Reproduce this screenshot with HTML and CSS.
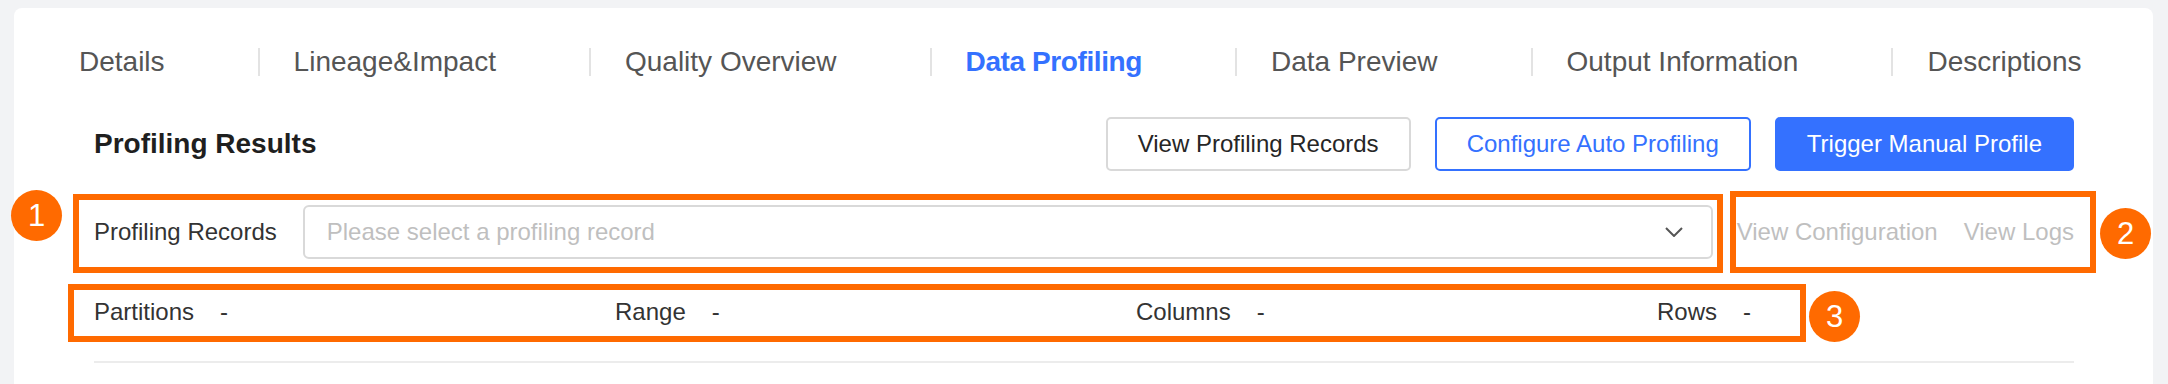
FILE: index.html
```html
<!DOCTYPE html>
<html lang="en">
<head>
    <meta charset="UTF-8">
    <title>Data Profiling</title>
    <link rel="stylesheet" href="styles.css">
</head>
<body>
<div class="page">
    <div class="card">
        <div class="tabs">
            <span class="tabs__item">Details</span>
            <span class="tabs__item">Lineage&amp;Impact</span>
            <span class="tabs__item">Quality Overview</span>
            <span class="tabs__item tabs__item--active">Data Profiling</span>
            <span class="tabs__item">Data Preview</span>
            <span class="tabs__item">Output Information</span>
            <span class="tabs__item">Descriptions</span>
        </div>
        <div class="content">
            <div class="header">
                <h2 class="header__title">Profiling Results</h2>
                <div class="header__actions">
                    <button class="btn">View Profiling Records</button>
                    <button class="btn btn--outline">Configure Auto Profiling</button>
                    <button class="btn btn--primary">Trigger Manual Profile</button>
                </div>
            </div>
            <div class="record">
                <span class="record__label">Profiling Records</span>
                <div class="select">
                    <span class="select__placeholder">Please select a profiling record</span>
                    <svg class="select__arrow" width="18" height="10" viewBox="0 0 18 10">
                        <path d="M1 1 L9 9 L17 1" fill="none" stroke="#555" stroke-width="2"/>
                    </svg>
                </div>
                <a class="record__link">View Configuration</a>
                <a class="record__link">View Logs</a>
            </div>
            <div class="stats">
                <div class="stats__item"><span class="stats__label">Partitions</span>-</div>
                <div class="stats__item"><span class="stats__label">Range</span>-</div>
                <div class="stats__item"><span class="stats__label">Columns</span>-</div>
                <div class="stats__item"><span class="stats__label">Rows</span>-</div>
            </div>
            <div class="divider"></div>
        </div>

        <!-- annotation overlays -->
        <div class="mark mark--one"></div>
        <div class="mark mark--two"></div>
        <div class="mark mark--three"></div>
        <span class="badge badge--one">1</span>
        <span class="badge badge--two">2</span>
        <span class="badge badge--three">3</span>
    </div>
</div>
</body>
</html>
```

FILE: styles.css
```css
* {
    box-sizing: border-box;
}
html, body {
    margin: 0;
    padding: 0;
    height: 100%;
    overflow: hidden;
}
body {
    background-color: #f2f3f5;
    font-family: "Liberation Sans", Arial, sans-serif;
    color: #333;
}
.page {
    padding: 8px 15px 0 14px;
}
.card {
    position: relative;
    height: 376px;
    background-color: #fff;
    border-radius: 8px 8px 0 0;
}
.tabs {
    display: flex;
    align-items: center;
    padding: 40px 0 0 65px;
}
.tabs__item {
    font-size: 28px;
    line-height: 28px;
    color: #555;
    padding-right: 93px;
    white-space: nowrap;
}
.tabs__item + .tabs__item {
    border-left: 2px solid #e3e3e3;
    padding-left: 34px;
}
.tabs__item--active {
    color: #3471ff;
    font-weight: 700;
    letter-spacing: -0.4px;
}
.content {
    padding: 0 79px 0 80px;
}
.header {
    display: flex;
    align-items: center;
    justify-content: space-between;
    margin-top: 41px;
    height: 54px;
}
.header__title {
    margin: 0;
    font-size: 28px;
    font-weight: 700;
    color: #1f1f1f;
}
.header__actions {
    display: flex;
    gap: 24px;
}
.btn {
    height: 54px;
    padding: 0 30px;
    font-family: inherit;
    font-size: 24px;
    color: #262626;
    background-color: #fff;
    border: 2px solid #d9d9d9;
    border-radius: 5px;
}
.btn--outline {
    color: #3471ff;
    border-color: #3471ff;
}
.btn--primary {
    color: #fff;
    background-color: #3471ff;
    border-color: #3471ff;
}
.record {
    display: flex;
    align-items: center;
    margin-top: 34px;
    height: 54px;
    font-size: 24px;
}
.record__label {
    margin-right: 26px;
    color: #333;
}
.select {
    flex: 1;
    display: flex;
    align-items: center;
    justify-content: space-between;
    height: 54px;
    padding: 0 28px 0 22px;
    border: 2px solid #d9d9d9;
    border-radius: 6px;
}
.select__placeholder {
    color: #bfbfbf;
}
.record__link {
    margin-left: 24px;
    color: #bfbfbf;
    white-space: nowrap;
}
.record__link + .record__link {
    margin-left: 26px;
}
.stats {
    display: grid;
    grid-template-columns: repeat(4, 521px);
    margin-top: 41px;
    font-size: 24px;
    line-height: 24px;
    color: #333;
}
.stats__label {
    margin-right: 26px;
}
.divider {
    margin-top: 37px;
    border-top: 2px solid #ececec;
}
.mark {
    position: absolute;
    border: 6px solid #ff6a00;
}
.mark--one {
    left: 59px;
    top: 186px;
    width: 1650px;
    height: 79px;
}
.mark--two {
    left: 1716px;
    top: 183px;
    width: 366px;
    height: 82px;
}
.mark--three {
    left: 54px;
    top: 276px;
    width: 1738px;
    height: 58px;
}
.badge {
    position: absolute;
    width: 51px;
    height: 51px;
    border-radius: 50%;
    background-color: #ff6a00;
    color: #fff;
    font-size: 31px;
    line-height: 51px;
    text-align: center;
}
.badge--one {
    left: -3px;
    top: 182px;
}
.badge--two {
    left: 2086px;
    top: 200px;
}
.badge--three {
    left: 1795px;
    top: 283px;
}
```
